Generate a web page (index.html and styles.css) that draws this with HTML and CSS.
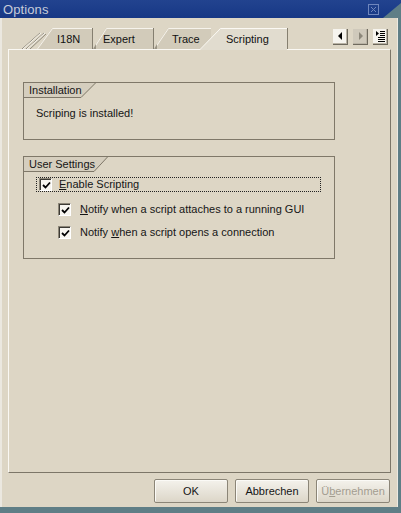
FILE: index.html
```html
<!DOCTYPE html>
<html>
<head>
<meta charset="utf-8">
<link rel="stylesheet" href="styles.css">
</head>
<body>
<div class="window">
  <div class="titlebar">
    <span class="title">Options</span>
    <span class="close"><svg width="11" height="11" viewBox="0 0 11 11"><rect x="0.5" y="0.5" width="10" height="10" fill="none" stroke="#6f86bd"/><path d="M3 3 L8 8 M8 3 L3 8" stroke="#6f86bd" stroke-width="1"/></svg></span>
  </div>
  <div class="frame">
    <div class="content">
      <div class="tabrow">
        <svg class="hatch" width="26" height="21" viewBox="0 0 26 21"><path d="M2 21 L20 5 M6 21 L24 5 M10 21 L26 6" stroke="#8f8a7c" stroke-width="1" fill="none"/><path d="M3 21 L21 5 M7 21 L25 5" stroke="#f4f1ea" stroke-width="1" fill="none"/></svg>
        <div class="tab t1">
          <svg class="tabshape" width="56" height="21" viewBox="0 0 56 21"><polygon points="0,21 15,0 55,0 55,21" fill="#d2cbba"/><polyline points="0.5,21 15.5,0.5 55,0.5" fill="none" stroke="#f6f3ec"/><line x1="55.5" y1="0" x2="55.5" y2="21" stroke="#857f70"/></svg>
          <span class="tablabel">I18N</span>
        </div>
        <div class="tab t2">
          <svg class="tabshape" width="61" height="21" viewBox="0 0 61 21"><polygon points="0,21 13,0 60,0 60,21" fill="#d2cbba"/><polyline points="0.5,21 13.5,0.5 60,0.5" fill="none" stroke="#f6f3ec"/><line x1="60.5" y1="0" x2="60.5" y2="21" stroke="#857f70"/><polygon points="0,21 3,16 3,21" fill="#9a9484"/></svg>
          <span class="tablabel">Expert</span>
        </div>
        <div class="tab t3">
          <svg class="tabshape" width="58" height="21" viewBox="0 0 58 21"><polygon points="0,21 14,0 57,0 57,21" fill="#d2cbba"/><polyline points="0.5,21 14.5,0.5 57,0.5" fill="none" stroke="#f6f3ec"/><polygon points="0,21 3,16 3,21" fill="#9a9484"/></svg>
          <span class="tablabel">Trace</span>
        </div>
        <div class="tab t4">
          <svg class="tabshape" width="88" height="22" viewBox="0 0 88 22"><polygon points="0,22 20,0 87,0 87,22" fill="#e1dccf"/><polyline points="0.5,21 20.5,0.5 87,0.5" fill="none" stroke="#fbf9f4"/><line x1="87.5" y1="0" x2="87.5" y2="21" stroke="#857f70"/></svg>
          <span class="tablabel">Scripting</span>
        </div>
        <div class="navs">
          <span class="navbtn"><svg width="15" height="16" viewBox="0 0 15 16"><polygon points="5,8 9,4 9,12" fill="#000"/></svg></span>
          <span class="navbtn disabled"><svg width="15" height="16" viewBox="0 0 15 16"><polygon points="10,8 6,4 6,12" fill="#8c877a"/></svg></span>
          <span class="navbtn"><svg width="15" height="16" viewBox="0 0 15 16"><polygon points="3,3 6,5.5 3,8" fill="#000"/><path d="M7 3.5 H12 M7 5.5 H12 M7 7.5 H12 M5 9.5 H12 M5 11.5 H12 M5 13.5 H12" stroke="#000" stroke-width="1"/></svg></span>
        </div>
      </div>
      <div class="panel">
        <div class="group install">
          <div class="ghead w-install">
            <svg class="gshape" width="72" height="15" viewBox="0 0 72 15"><polygon points="0,0 72,0 57,15 0,15" fill="#d5cebe"/><polyline points="0,14.5 57,14.5 71.5,0" fill="none" stroke="#7f7869"/></svg>
            <span class="glabel">Installation</span>
          </div>
          <div class="ginfo">Scriping is installed!</div>
        </div>
        <div class="group settings">
          <div class="ghead w-settings">
            <svg class="gshape" width="84" height="15" viewBox="0 0 84 15"><polygon points="0,0 84,0 70,15 0,15" fill="#d5cebe"/><polyline points="0,14.5 70,14.5 83.5,0" fill="none" stroke="#7f7869"/></svg>
            <span class="glabel">User Settings</span>
          </div>
          <div class="focusrow">
            <span class="cb"><svg width="9" height="9" viewBox="0 0 9 9"><path d="M1 4 L3.5 6.5 L8 1.5" stroke="#000" stroke-width="1.8" fill="none"/></svg></span>
            <span class="cblabel"><u>E</u>nable Scripting</span>
          </div>
          <div class="subrow first">
            <span class="cb"><svg width="9" height="9" viewBox="0 0 9 9"><path d="M1 4 L3.5 6.5 L8 1.5" stroke="#000" stroke-width="1.8" fill="none"/></svg></span>
            <span class="cblabel"><u>N</u>otify when a script attaches to a running GUI</span>
          </div>
          <div class="subrow">
            <span class="cb"><svg width="9" height="9" viewBox="0 0 9 9"><path d="M1 4 L3.5 6.5 L8 1.5" stroke="#000" stroke-width="1.8" fill="none"/></svg></span>
            <span class="cblabel">Notify <u>w</u>hen a script opens a connection</span>
          </div>
        </div>
      </div>
      <div class="buttons">
        <button class="btn">OK</button>
        <button class="btn">Abbrechen</button>
        <button class="btn disabled">Ü<u>b</u>ernehmen</button>
      </div>
    </div>
  </div>
</div>
</body>
</html>
```
FILE: styles.css
```css
html, body {
  margin: 0;
  padding: 0;
  background: #5f7e86;
}
body {
  width: 401px;
  height: 513px;
  overflow: hidden;
  font-family: "Liberation Sans", Arial, sans-serif;
  font-size: 11px;
  color: #151515;
}
.window {
  width: 401px;
  height: 507px;
  display: flex;
  flex-direction: column;
}
.titlebar {
  height: 18px;
  background: linear-gradient(#22438f, #173885);
  display: flex;
  align-items: center;
  clip-path: polygon(0 0, 100% 0, 100% 3px, 383px 100%, 0 100%);
  flex: none;
}
.title {
  color: #c6ccd9;
  font-size: 13px;
  margin-left: 3px;
  letter-spacing: 0.1px;
}
.close {
  margin-left: auto;
  margin-right: 22px;
  height: 11px;
  margin-top: 1px;
}
.close svg { display: block; }
.frame {
  flex: 1;
  display: flex;
  background: linear-gradient(to right, #ebe8e0 0, #ebe8e0 2px, #ddd6c5 2px);
  width: 398px;
}
.content {
  flex: 1;
  display: flex;
  flex-direction: column;
  border-right: 1px solid #ece9e1;
}
.tabrow {
  height: 31px;
  display: flex;
  align-items: flex-end;
  padding-left: 20px;
  padding-right: 9px;
  position: relative;
  z-index: 1;
}
.hatch { display: block; margin-right: -9px; }
.tab {
  position: relative;
  height: 21px;
  display: flex;
  align-items: center;
}
.tabshape {
  position: absolute;
  left: 0;
  top: 0;
}
.tablabel {
  position: relative;
  color: #111;
}
.t1 { width: 56px; }
.t1 .tablabel { padding-left: 20px; }
.t2 { width: 61px; }
.t2 .tablabel { padding-left: 10px; }
.t3 { width: 58px; margin-left: 0; }
.t3 .tablabel { padding-left: 18px; }
.t4 { width: 88px; height: 22px; margin-left: -12px; margin-bottom: -1px; }
.t4 .tablabel { padding-left: 26px; }
.navs {
  margin-left: auto;
  align-self: flex-start;
  margin-top: 11px;
  display: flex;
  gap: 5px;
}
.navbtn {
  width: 15px;
  height: 16px;
  box-sizing: border-box;
  background: #f6f4ee;
  border-right: 1px solid #6f6a5e;
  border-bottom: 1px solid #6f6a5e;
  box-shadow: inset -1px -1px 0 #b9b3a5;
  display: block;
}
.navbtn svg { display: block; margin: -1px 0 0 0; }
.navbtn.disabled { background: #cfc9bb; }
.panel {
  margin-left: 8px;
  width: 383px;
  height: 424px;
  box-sizing: border-box;
  border-top: 1px solid #faf8f3;
  border-left: 1px solid #faf8f3;
  border-right: 1px solid #7c7668;
  border-bottom: 1px solid #7c7668;
  padding-left: 14px;
  padding-top: 32px;
  display: flex;
  flex-direction: column;
  gap: 16px;
}
.group {
  width: 312px;
  box-sizing: border-box;
  border: 1px solid #7f7869;
}
.install { height: 58px; }
.settings { height: 103px; }
.ghead {
  position: relative;
  height: 15px;
  display: flex;
  align-items: center;
}
.w-install { width: 72px; }
.w-settings { width: 84px; }
.gshape { position: absolute; left: 0; top: 0; }
.glabel {
  position: relative;
  padding-left: 5px;
  margin-top: -1px;
  color: #151515;
}
.ginfo {
  margin-top: 9px;
  margin-left: 12px;
  line-height: 13px;
}
.focusrow {
  margin-top: 5px;
  margin-left: 12px;
  width: 285px;
  height: 15px;
  box-sizing: border-box;
  border: 1px dotted #222;
  display: flex;
  align-items: center;
  padding-left: 2px;
  gap: 7px;
}
.subrow {
  margin-top: 10px;
  margin-left: 34px;
  height: 13px;
  display: flex;
  align-items: center;
  gap: 9px;
}
.subrow.first { margin-top: 11px; }
.cb {
  width: 13px;
  height: 13px;
  box-sizing: border-box;
  background: #f7f5ef;
  border-top: 1px solid #8c8678;
  border-left: 1px solid #8c8678;
  border-right: 1px solid #ffffff;
  border-bottom: 1px solid #ffffff;
  box-shadow: inset 1px 1px 0 #3c3a34;
  display: flex;
  align-items: center;
  justify-content: center;
  flex: none;
}
.cb svg { display: block; margin: 1px 0 0 1px; }
.cblabel { line-height: 13px; }
.cblabel u { text-underline-offset: 1px; }
.buttons {
  display: flex;
  gap: 7px;
  margin-top: 6px;
  padding-left: 154px;
}
.btn {
  width: 74px;
  height: 24px;
  box-sizing: border-box;
  font-family: "Liberation Sans", Arial, sans-serif;
  font-size: 11px;
  color: #151515;
  background: linear-gradient(#f4f2ec, #dcd6c8);
  border: 1px solid #8b8577;
  border-radius: 2px;
  box-shadow: inset 1px 1px 0 #fbfaf6;
  padding: 0;
}
.btn.disabled { color: #a39d90; }
```
